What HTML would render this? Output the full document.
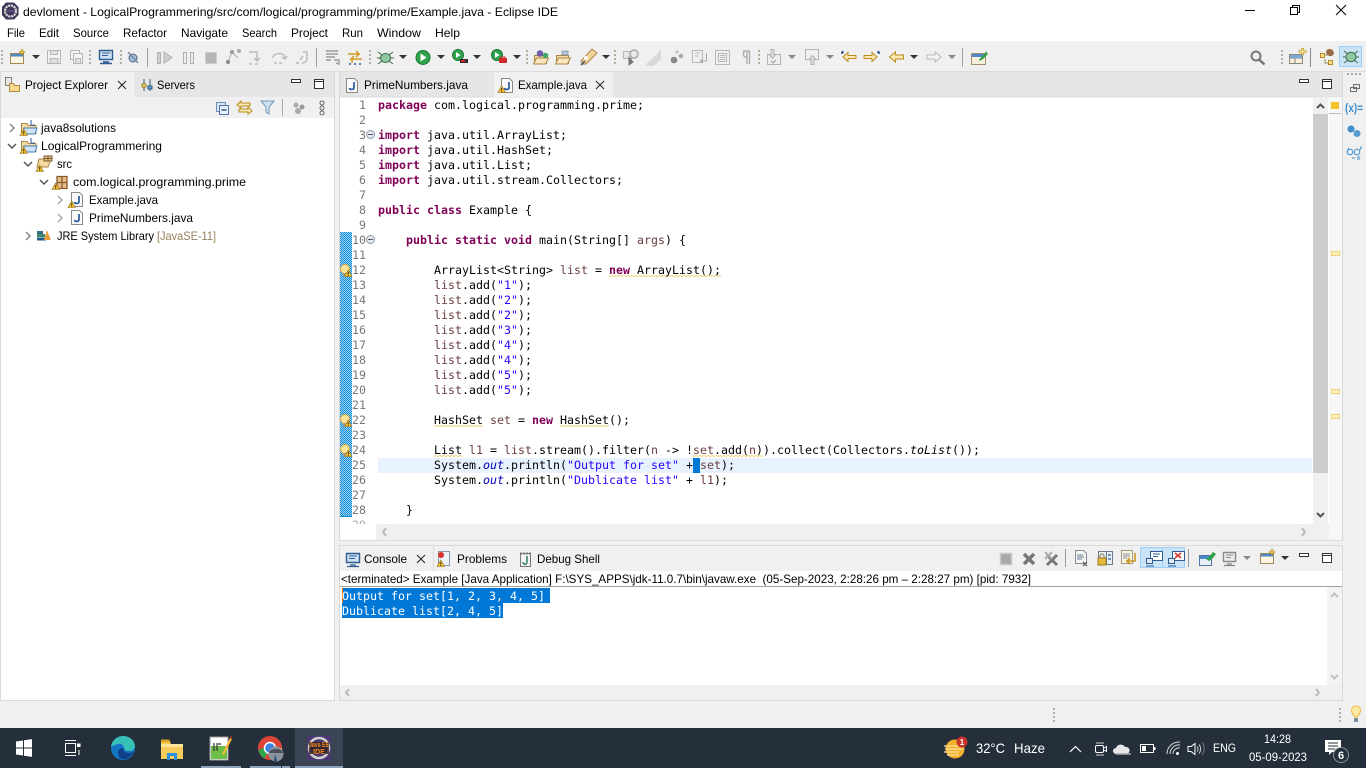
<!DOCTYPE html>
<html lang="en"><head><meta charset="utf-8"><title>Eclipse IDE</title>
<style>
html,body{margin:0;padding:0;background:#f0f0f0;width:1366px;height:768px;overflow:hidden}
svg{display:block;position:absolute;left:0;top:0}
text{font-family:"Liberation Sans",sans-serif;font-size:12px;fill:#000;white-space:pre}
.m text,text.m{font-family:"DejaVu Sans Mono","Liberation Mono",monospace;font-size:11.63px}
.k{fill:#7f0055;font-weight:bold}.s{fill:#2a00ff}.v{fill:#6a3e3e}.f{fill:#0000c0;font-style:italic}.i{font-style:italic}
.n{fill:#787878;text-anchor:end;font-family:"DejaVu Sans Mono",monospace;font-size:11.63px}
.w text,text.w{fill:#fff}
</style></head><body>
<svg width="1366" height="768" viewBox="0 0 1366 768" xmlns="http://www.w3.org/2000/svg">
<defs>
<pattern id="dith" width="2" height="2" patternUnits="userSpaceOnUse"><rect width="2" height="2" fill="#a0d4f2"/><rect width="1" height="1" fill="#0a8ad8"/><rect x="1" y="1" width="1" height="1" fill="#0a8ad8"/></pattern>
<pattern id="sq" width="4" height="2" patternUnits="userSpaceOnUse"><path d="M0 2L1 1L2 0L3 1L4 2" fill="none" stroke="#f1d27c" stroke-width=".9"/></pattern>
<g id="arr"><path d="M-4-2H4L0 2Z" fill="#333"/></g>
<g id="arrg"><path d="M-4-2H4L0 2Z" fill="#888"/></g>
<g id="grip"><path d="M0 0V14" stroke="#b5ad9f" stroke-width="2" stroke-dasharray="2 2"/></g>
<g id="wtri"><path d="M3.750 0L7.500 6.500H0Z" fill="#fbc42a" stroke="#8a6a20" stroke-width=".6"/><path d="M3.750 2V4.500M3.750 5V6" stroke="#222" stroke-width=".9"/></g>
<g id="jfile"><path d="M1.500.5H9.500L12.500 3.500V14.500H1.500Z" fill="#fbfbfb" stroke="#8a8a80"/><path d="M9 4V9.500C9 12 5 12 4.500 10" fill="none" stroke="#2a5a9e" stroke-width="1.700"/></g>
<g id="proj"><path d="M.5 3.500H6L7.500 5.500H15V13.500H.5Z" fill="#f5d9a0" stroke="#a98647"/><path d="M3 8H16L14 14H1Z" fill="#cfe4f7" stroke="#3f7fb8"/><path d="M10 0V4C10 6 13 6 13 4" fill="none" stroke="#2a5a9e" stroke-width="1"/></g>
<g id="bulb"><circle cx="5" cy="5" r="4.500" fill="#fce59a" stroke="#d7a93a"/><rect x="3" y="9.500" width="4" height="3.500" fill="#99a"/></g>
</defs>

<!-- title + menu -->
<rect width="1366" height="41" fill="#fff"/>
<g>
<path d="M6 2.500H14L18.500 7V15L14 19.500H6L2 15V7Z" fill="#3f3554"/>
<circle cx="10.500" cy="11" r="5.500" fill="none" stroke="#d8d8d8" stroke-width="2.200" stroke-dasharray="2.200 .7"/>
<rect x="7" y="10" width="7" height="2" fill="#5a4a86"/>
</g>
<text x="23" y="16" textLength="535" lengthAdjust="spacingAndGlyphs">devloment - LogicalProgrammering/src/com/logical/programming/prime/Example.java - Eclipse IDE</text>
<path d="M1245 10.500H1255" stroke="#000"/>
<path d="M1290.500 7.500h7v7h-7zM1292.500 7.500v-2h7v7h-2" fill="#fff" stroke="#000"/>
<path d="M1336 5L1346 15M1346 5L1336 15" stroke="#000" fill="none"/>
<g>
<text x="7" y="37" textLength="18" lengthAdjust="spacingAndGlyphs">File</text>
<text x="39" y="37" textLength="20" lengthAdjust="spacingAndGlyphs">Edit</text>
<text x="73" y="37" textLength="36" lengthAdjust="spacingAndGlyphs">Source</text>
<text x="123" y="37" textLength="44" lengthAdjust="spacingAndGlyphs">Refactor</text>
<text x="181" y="37" textLength="47" lengthAdjust="spacingAndGlyphs">Navigate</text>
<text x="242" y="37" textLength="35" lengthAdjust="spacingAndGlyphs">Search</text>
<text x="291" y="37" textLength="37" lengthAdjust="spacingAndGlyphs">Project</text>
<text x="342" y="37" textLength="21" lengthAdjust="spacingAndGlyphs">Run</text>
<text x="377" y="37" textLength="44" lengthAdjust="spacingAndGlyphs">Window</text>
<text x="435" y="37" textLength="25" lengthAdjust="spacingAndGlyphs">Help</text>
</g>

<!-- toolbar -->
<rect y="41" width="1366" height="30" fill="#f0f0f0"/>
<rect y="71" width="1366" height="1" fill="#dcdcdc"/>
<use href="#grip" x="2" y="50"/>
<!-- new -->
<path d="M10.500 53.500h13v10h-13z" fill="#fdf6e3" stroke="#a08a5a"/><rect x="11" y="54" width="12" height="2.500" fill="#4a8ac8"/><path d="M22 49l1 2 2 1-2 1-1 2-1-2-2-1 2-1z" fill="#f5c94a" stroke="#a88420" stroke-width=".6"/>
<use href="#arr" x="36" y="57"/>
<!-- save -->
<g fill="#f4f4f4" stroke="#b5b5b5"><path d="M47.500 50.500h13v13h-13z"/><path d="M50.500 50.500h7v4h-7zM50 58.500h8v5h-8z" fill="#e0e0e0"/>
<path d="M70.500 50.500h9v9h-9z"/><path d="M73.500 53.500h9v10h-9z"/><path d="M75.500 58.500h5v5h-5z" fill="#e0e0e0"/></g>
<use href="#grip" x="90" y="50"/>
<!-- monitor -->
<path d="M99.500 50.500h13v9h-13z" fill="#cfe2f5" stroke="#2e5d92" stroke-width="1.400"/><path d="M102 53h8M102 55.500h6" stroke="#2e5d92"/><path d="M103 62h6M100 63.500h12" stroke="#2e5d92" stroke-width="1.500"/>
<use href="#grip" x="121" y="50"/>
<circle cx="133" cy="58" r="4" fill="#9fc0e0" stroke="#567"/><path d="M128 52L138 63" stroke="#7a8696" stroke-width="1.400"/>
<rect x="147" y="48" width="1" height="19" fill="#a0a0a0"/>
<!-- debug gray -->
<g fill="#cfcfcf" stroke="#b0b0b0"><path d="M157.500 52.500h3v11h-3zM164 52l8 5.500-8 5.500z"/><path d="M183.500 52.500h3v11h-3zM190.500 52.500h3v11h-3z" fill="#ececec"/><rect x="205.500" y="52.500" width="11" height="11" fill="#b5b5b5" stroke="#ccc"/></g>
<path d="M228 62L232 52L238 58" fill="none" stroke="#aaa"/><circle cx="228" cy="62" r="2" fill="#888"/><circle cx="232" cy="52" r="2" fill="#999"/><circle cx="239" cy="51" r="2" fill="#aaa"/>
<g fill="none" stroke="#bcbcbc" stroke-width="1.500"><path d="M249 52h8v9M254 58l3 3 3-3M249 64h3M255 64h3"/><path d="M273 58c0-6 12-6 12 0M282 57l3 2 2-3M274 63h3M279 63h3"/><path d="M296 63h3M302 63c4 0 5-3 5-5V52h-4M300 60l3-4"/></g>
<rect x="316" y="48" width="1" height="19" fill="#a0a0a0"/>
<g fill="none" stroke="#9a9a9a" stroke-width="1.500"><path d="M326 51h12M326 54h12M326 57h9M326 60h5"/><path d="M334 60h5v4l-3 -1" stroke="#a0a0a0"/></g>
<g fill="none" stroke="#cf9a1e" stroke-width="1.500"><path d="M348 54h11l-3-3M359 54l-3 3M362 59h-11l3-3M352 59v4"/><path d="M349 64h2M354 64h2M359 64h2" stroke="#2a5a9e"/></g>
<use href="#grip" x="370" y="50"/>
<!-- bug -->
<g><ellipse cx="385.500" cy="58" rx="5" ry="4.500" fill="#8fc7a0" stroke="#41704f"/><path d="M378 52l4 3M393 52l-4 3M377 58h4M394 58h-4M378 64l4-3M393 64l-4-3" stroke="#3c6a4a"/></g>
<use href="#arr" x="403" y="57"/>
<circle cx="423" cy="57.500" r="7" fill="#31a24c" stroke="#1c7733"/><path d="M420.500 53.500l6 4-6 4z" fill="#fff"/>
<use href="#arr" x="441" y="57"/>
<circle cx="458" cy="55" r="5.500" fill="#31a24c" stroke="#1c7733"/><path d="M456 52l4.500 3-4.500 3z" fill="#fff"/><rect x="460" y="59" width="8" height="4" fill="#2d2d2d"/><rect x="461" y="60" width="4" height="2" fill="#d22"/>
<use href="#arr" x="477" y="57"/>
<circle cx="497" cy="55" r="5.500" fill="#31a24c" stroke="#1c7733"/><path d="M495 52l4.500 3-4.500 3z" fill="#fff"/><rect x="499" y="58" width="8" height="5" rx="1" fill="#d02626"/><path d="M501 58v-1h4v1" stroke="#d02626" fill="none"/>
<use href="#arr" x="517" y="57"/>
<use href="#grip" x="527" y="50"/>
<!-- open pkgs -->
<path d="M534.500 55.500h12v8h-12z" fill="#f8dba0" stroke="#a98647"/><path d="M533.500 64l3-6h12l-3 6z" fill="#fbe6bc" stroke="#a98647"/><circle cx="540" cy="53.500" r="3.300" fill="#6d5ba8"/><circle cx="545.500" cy="55.500" r="2.700" fill="#3fa860"/>
<path d="M556.500 55.500h12v8h-12z" fill="#f8dba0" stroke="#a98647"/><path d="M555.500 64l3-6h12l-3 6z" fill="#fbe6bc" stroke="#a98647"/><rect x="562" y="51" width="6" height="4" fill="#b8c9dc" stroke="#7088a0" stroke-width=".7"/>
<path d="M583 64l-2-3 11-12 5 4-11 11z" fill="#f2d49a" stroke="#a98647"/><path d="M581 65l4-4" stroke="#666" stroke-width="2"/><circle cx="586" cy="58" r="2" fill="#fff"/>
<use href="#arr" x="606" y="57"/>
<use href="#grip" x="615" y="50"/>
<!-- gray tools -->
<g fill="none" stroke="#b4b4b4"><path d="M623.500 51.500h8v7h-8z" fill="#e8e8e8"/><circle cx="634" cy="54" r="4" fill="#e8e8e8" stroke="#aaa" stroke-width="1.500"/><path d="M629 57v8l4-3z" fill="#777" stroke="#777"/></g>
<path d="M646 64l6-5 9-10v10l-6 6z" fill="#d9d9d9"/><path d="M646 65h8" stroke="#ccc"/>
<g fill="#888"><circle cx="674" cy="60" r="3.300"/><circle cx="681" cy="56" r="2.300" fill="#aaa"/><circle cx="677" cy="52" r="1.500" fill="#bbb"/></g>
<g fill="none" stroke="#b8b8b8"><path d="M692.500 50.500h10v12h-10zM695 53h5M695 56h3"/><path d="M706.500 53v8h-6l2-2m-2 2l2 2" stroke="#aaa"/><path d="M715.500 50.500h14v14h-14zM718.500 53.500h8v8h-8zM720 55.500h5M720 57.500h5M720 59.500h5"/></g>
<path d="M743 51h7M747 51v13M749.500 51v13M745 51a3.500 3.500 0 000 6h2" fill="none" stroke="#b0b0b0" stroke-width="1.400"/>
<use href="#grip" x="759" y="50"/>
<g fill="none" stroke="#b4b4b4"><path d="M767.500 54.500h13v10h-13z"/><path d="M771 49.500h3v5h2l-3.500 4-3.500-4h2z" fill="#ddd"/><path d="M771 61l2 2 3-3" stroke="#999"/></g>
<use href="#arrg" x="792" y="57"/>
<g fill="none" stroke="#b4b4b4"><path d="M805.500 49.500h13v10h-13z"/><path d="M811 64.500h3v-5h2l-3.500-4-3.500 4h2z" fill="#ddd"/></g>
<use href="#arrg" x="830" y="57"/>
<g fill="#fbe9b4" stroke="#b98a1c"><path d="M843 57l5-4.500v3h8v3h-8v3z"/><path d="M877 57l-5-4.500v3h-8v3h8v3z"/><path d="M889.500 57l6-5v3h8v4h-8v3z"/></g>
<path d="M842 51l1.500 2M843 53h-2" stroke="#27508c" stroke-width="1.500"/><path d="M879 51l-1.500 2M878 53h2" stroke="#27508c" stroke-width="1.500"/>
<use href="#arr" x="914" y="57"/>
<path d="M941 57l-6-5v3h-8v4h8v3z" fill="#f6f6f6" stroke="#b8b8b8"/>
<use href="#arrg" x="952" y="57"/>
<rect x="962" y="48" width="1" height="19" fill="#a0a0a0"/>
<path d="M971.500 53.500h14v11h-14z" fill="#f5efdc" stroke="#a09070"/><rect x="972" y="54" width="13" height="3" fill="#4a8ac8"/><path d="M979 60l4-5 4-4 0 2 1 1-5 5-3 2" fill="#2f9e44"/>
<!-- search + perspectives -->
<circle cx="1256" cy="56" r="4.500" fill="none" stroke="#777" stroke-width="2"/><path d="M1259.500 60l5 4.500" stroke="#777" stroke-width="2.500"/>
<use href="#grip" x="1282" y="50"/>
<path d="M1289.500 54.500h13v9h-13zM1289.500 58h13M1295 54.500v9" fill="#f5efdc" stroke="#8a8a7a"/><rect x="1290" y="55" width="12" height="3" fill="#7aa8d8"/><path d="M1299 50.500h2.500v-2h2v2h2.500v2h-2.500v2h-2v-2h-2.500z" fill="#fce9a8" stroke="#c49a30" stroke-width=".8"/>
<rect x="1310" y="48" width="1" height="19" fill="#888"/>
<path d="M1323 55h8M1325 59v4h7" fill="none" stroke="#a08a5a"/><rect x="1320.500" y="53.500" width="4" height="4" fill="#fbe08c" stroke="#b58a22"/><rect x="1328.500" y="60.500" width="4" height="4" fill="#fbe08c" stroke="#b58a22"/><ellipse cx="1330" cy="52.500" rx="4" ry="3.500" fill="#9a6a44" transform="rotate(30 1330 52.500)"/>
<rect x="1339.500" y="46.500" width="22" height="20" fill="#cbe3f7" stroke="#9bd0f8"/>
<ellipse cx="1351" cy="57" rx="5" ry="4.800" fill="#8fc7a0" stroke="#41704f"/><path d="M1344 51l4 3M1358 51l-4 3M1343 57h3M1359 57h-3M1344 63l4-3M1358 63l-4-3" stroke="#3c6a4a"/>

<!-- right trim -->
<rect x="1343" y="72" width="23" height="629" fill="#f0f0f0"/>
<path d="M1347 74h14" stroke="#aaa" stroke-width="2" stroke-dasharray="2 2"/>
<path d="M1353.500 84.500h6v4h-6zM1350.500 87.500h6v4h-6z" fill="#eee" stroke="#6e6e6e"/>
<text x="1345" y="112" style="font-size:12px;font-weight:bold;fill:#3c8fcc" textLength="18" lengthAdjust="spacingAndGlyphs">(x)=</text>
<circle cx="1351" cy="129" r="3.500" fill="#3d8fcf"/><circle cx="1357" cy="133.500" r="3.500" fill="#5a9dcf"/>
<g fill="none" stroke="#3d8fcf"><circle cx="1350" cy="152" r="2.800"/><circle cx="1357" cy="152" r="2.800"/><path d="M1347 152l2-4M1360 150l1-3h1"/><path d="M1352 158h3M1357 157h3M1357 159h3"/></g>

<!-- Left panel -->
<rect x="0" y="72" width="335" height="629" fill="#fff"/>
<rect x="0" y="72" width="335" height="26" fill="#e6e6e6"/>
<rect x="0" y="97" width="335" height="21" fill="#f0f0f0"/>
<rect x="1" y="72" width="133" height="26" fill="#f0f0f0"/>
<path d="M.5 72V700.500H334.500V72" fill="none" stroke="#d9d9d9"/>
<path d="M5.500 77.500h6v8h-6z" fill="#e8e8e8" stroke="#8a7f6a"/><path d="M9.500 83.500h4l1 2h5v6h-10z" fill="#f8d98e" stroke="#ad8a40"/>
<text x="25" y="89" textLength="83" lengthAdjust="spacingAndGlyphs">Project Explorer</text>
<path d="M118 81L126 89M126 81L118 89" stroke="#222" fill="none"/>
<g fill="none" stroke="#3a5670"><path d="M144 79v12M150 79v12"/></g><rect x="142" y="84" width="4" height="3" fill="#f5d66e" stroke="#a18a2a"/><rect x="148" y="86" width="4" height="3" fill="#5ea0d8" stroke="#2a5a8a"/>
<text x="157" y="89" textLength="38" lengthAdjust="spacingAndGlyphs">Servers</text>
<rect x="291.500" y="79.500" width="9" height="3" fill="#fff" stroke="#333"/>
<rect x="314.500" y="79.500" width="9" height="9" fill="#fff" stroke="#333"/><path d="M314.500 81.500h9" stroke="#333"/>
<!-- view toolbar -->
<path d="M216.500 102.500h9v9h-9z" fill="#d8e6f5" stroke="#6c8fb4"/><path d="M219.500 105.500h9v9h-9z" fill="#e8f0f9" stroke="#4a76a8"/><path d="M221.500 110h5" stroke="#2a4a74" stroke-width="1.400"/>
<g fill="#fbe9b4" stroke="#b98a1c"><path d="M238 105l4-4v2h9v3h-9v2z" transform="translate(-1 0)"/><path d="M252 111l-4-4v2h-9v3h9v2z"/></g>
<path d="M261 101h13l-5 6v7l-3-2v-5z" fill="#cfe2f2" stroke="#7596b4"/>
<rect x="282" y="99" width="1" height="17" fill="#aaa"/>
<circle cx="296" cy="105" r="2.500" fill="#aaa"/><circle cx="302" cy="107" r="2.500" fill="#999"/><circle cx="298" cy="111" r="3" fill="#aaa"/>
<circle cx="322" cy="103" r="2" fill="none" stroke="#666"/><circle cx="322" cy="108" r="2" fill="none" stroke="#666"/><circle cx="322" cy="113" r="2" fill="none" stroke="#666"/>
<!-- tree -->
<g fill="none" stroke="#8a8a8a" stroke-width="1.500"><path d="M10 124l4 4-4 4"/><path d="M8 144l4 4 4-4" stroke="#555"/><path d="M24 162l4 4 4-4" stroke="#555"/><path d="M40 180l4 4 4-4" stroke="#555"/><path d="M58 196l4 4-4 4" stroke="#aaa"/><path d="M58 214l4 4-4 4" stroke="#aaa"/><path d="M26 232l4 4-4 4"/></g>
<use href="#proj" x="21" y="120"/><use href="#wtri" x="20" y="129"/>
<use href="#proj" x="21" y="138"/><use href="#wtri" x="20" y="147"/>
<path d="M39 159h12l-3 8H37z" fill="#f8dba0" stroke="#a98647"/><path d="M44 156h8v5h-8zM48 156v5M44 158.500h8" fill="#e3c58a" stroke="#7c5a2c"/><use href="#wtri" x="36" y="165"/>
<path d="M57 176.500h10v12h-10zM62 176.500v12M57 182.500h10" fill="#e6bf8a" stroke="#8a5a2c" stroke-width="1.300"/><use href="#wtri" x="52" y="183"/>
<use href="#jfile" x="70" y="192"/><use href="#wtri" x="68" y="201"/>
<use href="#jfile" x="70" y="210"/>
<path d="M37 234h8v3h-8z" fill="#3a8a6a"/><path d="M37 237.500h9v3h-9z" fill="#2a5a8a"/><path d="M37 231h6v3h-6z" fill="#3a6a8a"/><path d="M44 240l3-10 4 10z" fill="#e8a040"/>
<text x="41" y="132" textLength="75" lengthAdjust="spacingAndGlyphs">java8solutions</text>
<text x="41" y="150" textLength="121" lengthAdjust="spacingAndGlyphs">LogicalProgrammering</text>
<text x="57" y="168" textLength="15" lengthAdjust="spacingAndGlyphs">src</text>
<text x="73" y="186" textLength="173" lengthAdjust="spacingAndGlyphs">com.logical.programming.prime</text>
<text x="89" y="204" textLength="69" lengthAdjust="spacingAndGlyphs">Example.java</text>
<text x="89" y="222" textLength="104" lengthAdjust="spacingAndGlyphs">PrimeNumbers.java</text>
<text x="57" y="240" textLength="97" lengthAdjust="spacingAndGlyphs">JRE System Library</text>
<text x="157" y="240" textLength="59" lengthAdjust="spacingAndGlyphs" style="fill:#95805a">[JavaSE-11]</text>

<!-- Editor -->
<rect x="339" y="72" width="1003" height="469" fill="#fff"/>
<rect x="339" y="72" width="1003" height="25" fill="#e6e6e6"/>
<rect x="339" y="96.500" width="1003" height="1" fill="#dcdcdc"/>
<rect x="494" y="72" width="119" height="25" fill="#f0f0f0"/>
<rect x="339" y="72" width="1" height="469" fill="#d9d9d9"/>
<use href="#jfile" x="345" y="78"/>
<text x="364" y="89" textLength="104" lengthAdjust="spacingAndGlyphs">PrimeNumbers.java</text>
<use href="#jfile" x="500" y="78"/><use href="#wtri" x="498" y="86"/>
<text x="518" y="89" textLength="69" lengthAdjust="spacingAndGlyphs">Example.java</text>
<path d="M596 81L604 89M604 81L596 89" stroke="#222" fill="none"/>
<rect x="1299.500" y="79.500" width="9" height="3" fill="#fff" stroke="#333"/>
<rect x="1322.500" y="79.500" width="9" height="9" fill="#fff" stroke="#333"/><path d="M1322.500 81.500h9" stroke="#333"/>

<rect x="340" y="232" width="12" height="285" fill="url(#dith)"/>
<rect x="340" y="516" width="12" height="1" fill="#0a8ad8"/>
<rect x="378" y="458" width="934" height="15" fill="#e8f2fe"/>
<rect x="693" y="458" width="7" height="15" fill="#0078d7"/>

<!-- line numbers -->
<g>
<text class="n" x="366" y="109">1</text><text class="n" x="366" y="124">2</text><text class="n" x="366" y="139">3</text><text class="n" x="366" y="154">4</text><text class="n" x="366" y="169">5</text><text class="n" x="366" y="184">6</text><text class="n" x="366" y="199">7</text><text class="n" x="366" y="214">8</text><text class="n" x="366" y="229">9</text><text class="n" x="366" y="244">10</text><text class="n" x="366" y="259">11</text><text class="n" x="366" y="274">12</text><text class="n" x="366" y="289">13</text><text class="n" x="366" y="304">14</text><text class="n" x="366" y="319">15</text><text class="n" x="366" y="334">16</text><text class="n" x="366" y="349">17</text><text class="n" x="366" y="364">18</text><text class="n" x="366" y="379">19</text><text class="n" x="366" y="394">20</text><text class="n" x="366" y="409">21</text><text class="n" x="366" y="424">22</text><text class="n" x="366" y="439">23</text><text class="n" x="366" y="454">24</text><text class="n" x="366" y="469">25</text><text class="n" x="366" y="484">26</text><text class="n" x="366" y="499">27</text><text class="n" x="366" y="514">28</text>
</g>
<g fill="#e4e8ee" stroke="#8a9aaa"><circle cx="370.500" cy="134.500" r="4"/><circle cx="370.500" cy="239.500" r="4"/></g>
<path d="M368 134.500h5M368 239.500h5" stroke="#556"/>
<use href="#bulb" x="340" y="264"/><use href="#wtri" x="344.500" y="270"/>
<use href="#bulb" x="340" y="414"/><use href="#wtri" x="344.500" y="420"/>
<use href="#bulb" x="340" y="444"/><use href="#wtri" x="344.500" y="450"/>

<!-- squiggles -->
<rect x="609" y="275" width="112" height="2" fill="url(#sq)"/>
<rect x="434" y="425" width="49" height="2" fill="url(#sq)"/>
<rect x="560" y="425" width="49" height="2" fill="url(#sq)"/>
<rect x="434" y="455" width="28" height="2" fill="url(#sq)"/>
<rect x="693" y="455" width="70" height="2" fill="url(#sq)"/>

<!-- code -->
<g class="m">
<text x="378" y="109"><tspan class="k">package</tspan> com.logical.programming.prime;</text>
<text x="378" y="139"><tspan class="k">import</tspan> java.util.ArrayList;</text>
<text x="378" y="154"><tspan class="k">import</tspan> java.util.HashSet;</text>
<text x="378" y="169"><tspan class="k">import</tspan> java.util.List;</text>
<text x="378" y="184"><tspan class="k">import</tspan> java.util.stream.Collectors;</text>
<text x="378" y="214"><tspan class="k">public</tspan> <tspan class="k">class</tspan> Example {</text>
<text x="406" y="244"><tspan class="k">public</tspan> <tspan class="k">static</tspan> <tspan class="k">void</tspan> main(String[] <tspan class="v">args</tspan>) {</text>
<text x="434" y="274">ArrayList&lt;String&gt; <tspan class="v">list</tspan> = <tspan class="k">new</tspan> ArrayList();</text>
<text x="434" y="289"><tspan class="v">list</tspan>.add(<tspan class="s">"1"</tspan>);</text>
<text x="434" y="304"><tspan class="v">list</tspan>.add(<tspan class="s">"2"</tspan>);</text>
<text x="434" y="319"><tspan class="v">list</tspan>.add(<tspan class="s">"2"</tspan>);</text>
<text x="434" y="334"><tspan class="v">list</tspan>.add(<tspan class="s">"3"</tspan>);</text>
<text x="434" y="349"><tspan class="v">list</tspan>.add(<tspan class="s">"4"</tspan>);</text>
<text x="434" y="364"><tspan class="v">list</tspan>.add(<tspan class="s">"4"</tspan>);</text>
<text x="434" y="379"><tspan class="v">list</tspan>.add(<tspan class="s">"5"</tspan>);</text>
<text x="434" y="394"><tspan class="v">list</tspan>.add(<tspan class="s">"5"</tspan>);</text>
<text x="434" y="424">HashSet <tspan class="v">set</tspan> = <tspan class="k">new</tspan> HashSet();</text>
<text x="434" y="454">List <tspan class="v">l1</tspan> = <tspan class="v">list</tspan>.stream().filter(<tspan class="v">n</tspan> -&gt; !<tspan class="v">set</tspan>.add(<tspan class="v">n</tspan>)).collect(Collectors.<tspan class="i">toList</tspan>());</text>
<text x="434" y="469">System.<tspan class="f">out</tspan>.println(<tspan class="s">"Output for set"</tspan> + <tspan x="700" class="v">set</tspan>);</text>
<text x="434" y="484">System.<tspan class="f">out</tspan>.println(<tspan class="s">"Dublicate list"</tspan> + <tspan class="v">l1</tspan>);</text>
<text x="406" y="514">}</text>
</g>
<text class="n" x="366" y="529" style="fill:#aaa">29</text>
<rect x="340" y="524" width="36" height="16" fill="#fff"/>

<!-- editor scrollbars -->
<rect x="376" y="524" width="966" height="16" fill="#f0f0f0"/>
<path d="M386 528l-3 4 3 4" fill="none" stroke="#bbb" stroke-width="2"/>
<path d="M1302 528l3 4-3 4" fill="none" stroke="#bbb" stroke-width="2"/>
<rect x="1313" y="97" width="15" height="427" fill="#f0f0f0"/>
<rect x="1313" y="114" width="15" height="359" fill="#cdcdcd"/>
<path d="M1317 108l3.500-3.500 3.500 3.500" fill="none" stroke="#555" stroke-width="2"/>
<path d="M1317 513l3.500 3.500 3.500-3.500" fill="none" stroke="#555" stroke-width="2"/>
<rect x="1329" y="97" width="13" height="444" fill="#f7f7f7"/>
<rect x="1342" y="72" width="1" height="469" fill="#d9d9d9"/>
<rect x="1331" y="102" width="8" height="7" fill="#f5c32c"/>
<rect x="1329" y="113" width="12" height="1" fill="#bbb"/>
<g fill="#fbf0c4" stroke="#f2d46c"><rect x="1331.500" y="251.500" width="8" height="4"/><rect x="1331.500" y="389.500" width="8" height="4"/><rect x="1331.500" y="414.500" width="8" height="4"/></g>
<rect x="339" y="540" width="1004" height="1" fill="#dcdcdc"/>

<!-- Console -->
<rect x="339" y="545" width="1004" height="156" fill="#f0f0f0"/>
<rect x="339" y="545" width="1004" height="1" fill="#d9d9d9"/>
<rect x="339" y="546" width="1" height="155" fill="#d9d9d9"/><rect x="1342" y="546" width="1" height="155" fill="#d9d9d9"/>
<rect x="339" y="700" width="1004" height="1" fill="#d9d9d9"/>
<path d="M346.500 553.500h13v9h-13z" fill="#cfe2f5" stroke="#2e5d92" stroke-width="1.400"/><path d="M349 556h8M349 558.500h6" stroke="#2e5d92"/><path d="M350 565h6M347 566.500h12" stroke="#2e5d92" stroke-width="1.300"/>
<text x="364" y="563" textLength="43" lengthAdjust="spacingAndGlyphs">Console</text>
<path d="M417 555L425 563M425 555L417 563" stroke="#222" fill="none"/>
<rect x="433" y="546" width="1" height="25" fill="#dcdcdc"/>
<path d="M438.500 551.500h11v14h-11z" fill="#eef3f8" stroke="#8a98a8"/><circle cx="441" cy="555" r="3" fill="#d8322a"/><use href="#wtri" x="437" y="560"/>
<text x="457" y="563" textLength="50" lengthAdjust="spacingAndGlyphs">Problems</text>
<path d="M520.500 553.500h10v13h-10z" fill="#f5f5f0" stroke="#777"/><path d="M521 552v3M524 552v3M527 552v3M530 552v3" stroke="#777"/><path d="M527 556v6c0 3-4 3-4 0" fill="none" stroke="#2e7d6a" stroke-width="1.500"/>
<text x="537" y="563" textLength="63" lengthAdjust="spacingAndGlyphs">Debug Shell</text>
<!-- console toolbar -->
<rect x="1000.500" y="553.500" width="11" height="11" fill="#a8a8a8" stroke="#c8c8c8" stroke-width="1.500"/>
<path d="M1024 554l10 10M1034 554l-10 10" stroke="#777" stroke-width="3.500"/>
<path d="M1047 555l10 10M1057 555l-10 10" stroke="#777" stroke-width="3"/><path d="M1045 552l7 7M1052 552l-7 7" stroke="#aaa" stroke-width="2"/>
<rect x="1065" y="549" width="1" height="18" fill="#999"/>
<path d="M1075.500 550.500h8l3 3v10h-11z" fill="#f5f5f0" stroke="#8a8a9a"/><path d="M1077 555h6M1077 557h7M1077 559h5" stroke="#6a7a9a"/><path d="M1083 562l4 4M1087 562l-4 4" stroke="#666" stroke-width="1.500"/>
<path d="M1098.500 551.500h14v13h-14zM1106.500 551.500v13" fill="#e6eef6" stroke="#6a7a8a"/><path d="M1108 555h3M1108 559h3" stroke="#4a76a8" stroke-width="1.500"/><rect x="1098" y="558" width="8" height="7" fill="#e9b93c" stroke="#9a7a20"/><path d="M1100 558v-2a2 2 0 014 0v2" fill="none" stroke="#8a7a40"/>
<path d="M1121.500 550.500h11v13h-11z" fill="#faf6e6" stroke="#a09a7a"/><path d="M1123 554h7M1123 556h7M1123 558h4" stroke="#8a8a9a"/><path d="M1135 553v8h-8l3-3m-3 3l3 3" fill="none" stroke="#c9971e" stroke-width="1.600"/>
<rect x="1140.500" y="547.500" width="22" height="20" fill="#cbe3f7" stroke="#9bd0f8"/><rect x="1162.500" y="547.500" width="22" height="20" fill="#cbe3f7" stroke="#9bd0f8"/>
<path d="M1150.500 551.500h12v9h-12z" fill="#fff" stroke="#2e5d92"/><path d="M1153 554h7M1153 556.500h5" stroke="#2e5d92"/><rect x="1146.500" y="558.500" width="6" height="5" fill="#dfeaf5" stroke="#2e5d92"/><path d="M1146 566h8" stroke="#2e5d92"/>
<path d="M1172.500 551.500h12v9h-12z" fill="#fff" stroke="#2e5d92"/><path d="M1175 553l6 5M1181 553l-6 5" stroke="#d8322a" stroke-width="1.500"/><rect x="1168.500" y="558.500" width="6" height="5" fill="#dfeaf5" stroke="#2e5d92"/><path d="M1168 566h8" stroke="#2e5d92"/>
<rect x="1188" y="549" width="1" height="18" fill="#999"/>
<path d="M1199.500 555.500h12v10h-12z" fill="#e8eff6" stroke="#4a76a8"/><rect x="1200" y="556" width="11" height="3" fill="#4a8ac8"/><path d="M1206 559l4-3 3-4 3 2-3 4-4 3z" fill="#2f9e44"/>
<path d="M1223.500 552.500h12v9h-12z" fill="#eee" stroke="#888" stroke-width="1.400"/><path d="M1226 555h7M1226 557.500h5" stroke="#888"/><path d="M1227 564h5M1224 565.500h11" stroke="#888" stroke-width="1.200"/>
<use href="#arrg" x="1247" y="558"/>
<path d="M1260.500 553.500h13v10h-13z" fill="#fdf6e3" stroke="#a08a5a"/><rect x="1261" y="554" width="12" height="2.500" fill="#4a8ac8"/><path d="M1272 549l1 2 2 1-2 1-1 2-1-2-2-1 2-1z" fill="#f5c94a" stroke="#a88420" stroke-width=".6"/>
<use href="#arr" x="1285" y="558"/>
<rect x="1299.500" y="553.500" width="9" height="3" fill="#fff" stroke="#333"/>
<rect x="1322.500" y="553.500" width="9" height="9" fill="#fff" stroke="#333"/><path d="M1322.500 555.500h9" stroke="#333"/>

<rect x="340" y="571" width="1002" height="15" fill="#fff"/>
<rect x="340" y="586" width="1002" height="1" fill="#a0a0a0"/>
<text x="341" y="583" textLength="690" lengthAdjust="spacingAndGlyphs">&lt;terminated&gt; Example [Java Application] F:\SYS_APPS\jdk-11.0.7\bin\javaw.exe  (05-Sep-2023, 2:28:26 pm – 2:28:27 pm) [pid: 7932]</text>
<rect x="340" y="587" width="1002" height="98" fill="#fff"/>
<rect x="342" y="588" width="208" height="15" fill="#0078d7"/>
<rect x="342" y="603" width="161" height="15" fill="#0078d7"/>
<rect x="342" y="588" width="1" height="15" fill="#e07020"/>
<g class="m w">
<text x="342" y="600" style="fill:#fff">Output for set[1, 2, 3, 4, 5]</text>
<text x="342" y="615" style="fill:#fff">Dublicate list[2, 4, 5]</text>
</g>
<rect x="1327" y="587" width="15" height="98" fill="#f3f3f3"/>
<path d="M1331 597l3.500-3.500 3.500 3.500" fill="none" stroke="#c0c0c0" stroke-width="2"/>
<path d="M1331 675l3.500 3.500 3.500-3.500" fill="none" stroke="#c0c0c0" stroke-width="2"/>
<rect x="340" y="685" width="1002" height="15" fill="#f0f0f0"/>
<path d="M349 689l-3 3.500 3 3.500" fill="none" stroke="#bbb" stroke-width="2"/>
<path d="M1316 689l3 3.500-3 3.500" fill="none" stroke="#bbb" stroke-width="2"/>

<!-- status -->
<rect y="701" width="1366" height="27" fill="#f0f0f0"/>
<path d="M1054 708v14M1340 708v14" stroke="#b5ad9f" stroke-width="2" stroke-dasharray="2 2"/>
<path d="M1354.500 717c0-2-3-3-3-6.500a4.500 4.500 0 019 0c0 3.500-3 4.500-3 6.500z" fill="#fdeaa8" stroke="#f0b93a"/><rect x="1354" y="718" width="4" height="4" fill="#7d8ea3"/>

<!-- taskbar -->
<rect y="728" width="1366" height="40" fill="#252e3b"/>
<rect x="295" y="728" width="48" height="40" fill="#3a4452"/>
<rect x="201" y="766" width="40" height="2" fill="#8ba3bd"/><rect x="250" y="766" width="31" height="2" fill="#8ba3bd"/><rect x="282" y="766" width="8" height="2" fill="#8ba3bd"/><rect x="295" y="766" width="48" height="2" fill="#8ba3bd"/>
<path d="M16 741.500l7-1v7h-7zM24 740.300l8-1.200v8.400h-8zM16 748.500h7v7l-7-1zM24 748.500h8v8.400l-8-1.200z" fill="#fff"/>
<g fill="none" stroke="#fff"><path d="M65.500 743.500h10v9h-10zM65 740.500h11M65 755.500h11"/><path d="M79 750v5"/><rect x="77.500" y="744" width="2.500" height="2.500" fill="#fff"/></g>
<circle cx="123" cy="748" r="12" fill="#1473c4"/>
<path d="M111 748c0-8 7-12 12-12 7 0 12 5 12 10 0 3-2 5-6 5-3 0-5-1-5-3 0-3-3-5-6-4-4 1-7 2-7 4z" fill="#35c1b5"/>
<path d="M118 752c0-3 4-5 6-3-1 2 1 4 5 4 2 0 4-1 5-2-2 5-7 9-12 8-3-1-4-4-4-7z" fill="#0d3f8a"/>
<path d="M161 741h8l2 3h12v15h-22z" fill="#f6cd5a"/><path d="M161 739.500h8l2 3h-10z" fill="#e0a520"/><rect x="161" y="744" width="22" height="3" fill="#fbe39a"/><path d="M167 760v-7h10v7h-3v-4h-4v4z" fill="#2d8fe0"/>
<path d="M210 737h18v23h-18z" fill="#fff" stroke="#9a9a9a"/><rect x="211" y="746" width="16" height="13" fill="#6cc04a"/><path d="M214 743v8M217 743v8M218 744h3" stroke="#333" stroke-width="1.200"/><path d="M222 754l8-16 2 1-8 16z" fill="#f5b82e"/><path d="M230 738l1-2 1 1-1 2z" fill="#c33"/>
<circle cx="270" cy="748" r="12" fill="#dd4437"/>
<path d="M258.500 750a12 12 0 006 8.500l6-10-3-2z" fill="#2fa24c"/><path d="M272 760a12 12 0 0010-12l-11 0z" fill="#fbc02d"/><circle cx="270" cy="748" r="5.500" fill="#3e82e8" stroke="#fff" stroke-width="1.500"/>
<circle cx="276" cy="754" r="7.500" fill="#8a949e"/><path d="M269 753a7 4 0 0114 0z" fill="#4a5058"/><path d="M275 754l2 7-3 0z" fill="#24497e"/>
<rect x="307" y="736" width="24" height="24" rx="1" fill="#4a3670"/>
<circle cx="319" cy="748" r="10" fill="none" stroke="#cfcfcf" stroke-width="2.500"/>
<rect x="309" y="742" width="20" height="12" fill="#2d2020" opacity=".8"/>
<text x="309" y="747" textLength="20" lengthAdjust="spacingAndGlyphs" style="font-size:7px;fill:#f08a24;font-weight:bold">Java EE</text>
<text x="313" y="754" textLength="12" lengthAdjust="spacingAndGlyphs" style="font-size:7.500px;fill:#f08a24;font-weight:bold">IDE</text>
<!-- tray -->
<circle cx="955" cy="749" r="9.500" fill="#f5b02c"/><path d="M944 746h15M945 749h18M944 752h15M947 755h12" stroke="#fbe0a0" stroke-width="1.200"/>
<circle cx="962" cy="742" r="5.500" fill="#c9342c"/><text x="962" y="745" text-anchor="middle" style="font-size:8px;fill:#fff;font-weight:bold">1</text>
<text x="976" y="753" textLength="29" lengthAdjust="spacingAndGlyphs" style="font-size:14px;fill:#fff">32°C</text>
<text x="1014" y="753" textLength="31" lengthAdjust="spacingAndGlyphs" style="font-size:14px;fill:#fff">Haze</text>
<path d="M1070 752l5.500-5.500 5.500 5.500" fill="none" stroke="#fff" stroke-width="1.200"/>
<path d="M1096 743h8M1096 755h8" stroke="#d0d0d0"/><rect x="1095.500" y="745.500" width="8" height="7" rx="1.500" fill="none" stroke="#fff"/><path d="M1104 748l2.500-1.500v5l-2.500-1.500" fill="none" stroke="#fff"/>
<path d="M1116 754a3 3 0 010-6 5 5 0 019-1 3.500 3.500 0 012 7z" fill="#e8e8e8"/><path d="M1116 754h15" stroke="#aaa" stroke-width="1.500"/>
<rect x="1140.500" y="744.500" width="13" height="8" fill="none" stroke="#fff"/><rect x="1142" y="746" width="4" height="5" fill="#fff"/><rect x="1154" y="747" width="1.500" height="3" fill="#fff"/>
<path d="M1167 754a12 12 0 0113-12M1170 754a9 9 0 0110-9M1173 754a6 6 0 017-6" fill="none" stroke="#d8d8d8"/><circle cx="1177.500" cy="753.500" r="1.500" fill="#fff"/>
<path d="M1188 746.500h3l4-3v11l-4-3h-3z" fill="none" stroke="#fff"/><path d="M1197 746.500a3.500 3.500 0 010 5M1199 744.500a7 7 0 010 9" fill="none" stroke="#ccc"/><path d="M1202 742a11 11 0 010 13" fill="none" stroke="#778"/>
<text x="1213" y="752" textLength="23" lengthAdjust="spacingAndGlyphs" style="fill:#fff">ENG</text>
<text x="1264" y="743" textLength="27" lengthAdjust="spacingAndGlyphs" style="fill:#fff">14:28</text>
<text x="1249" y="761" textLength="58" lengthAdjust="spacingAndGlyphs" style="fill:#fff">05-09-2023</text>
<path d="M1325 740h16v12h-9l-3 3v-3h-4z" fill="#fff"/><path d="M1328 743h10M1328 746h10M1328 749h7" stroke="#252e3b"/>
<circle cx="1341" cy="755" r="7.500" fill="#252e3b" stroke="#8a94a0"/><text x="1341" y="759" text-anchor="middle" style="font-size:11px;fill:#fff;font-weight:bold">6</text>
</svg>
</body></html>
